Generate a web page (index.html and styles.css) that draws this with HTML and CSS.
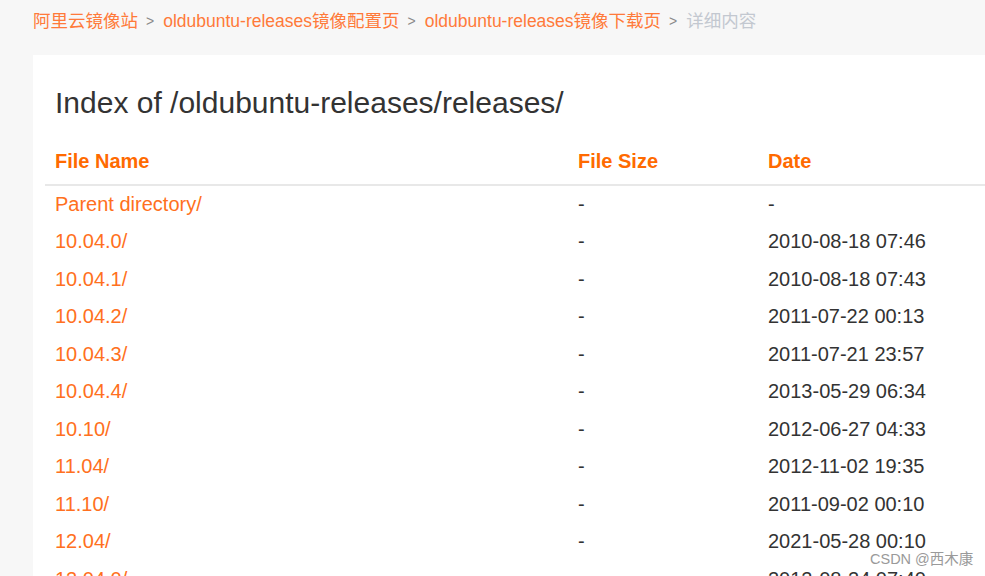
FILE: index.html
```html
<!DOCTYPE html>
<html lang="zh-CN">
<head>
<meta charset="utf-8">
<title>Index of /oldubuntu-releases/releases/</title>
<link rel="stylesheet" href="styles.css">
</head>
<body>
<div class="page">
  <nav class="crumbs">
    <a class="crumb" href="#">阿里云镜像站</a><span class="sep">&gt;</span>
    <a class="crumb" href="#">oldubuntu-releases镜像配置页</a><span class="sep">&gt;</span>
    <a class="crumb" href="#">oldubuntu-releases镜像下载页</a><span class="sep">&gt;</span>
    <span class="crumb current">详细内容</span>
  </nav>
  <main class="card">
    <h1 class="title">Index of /oldubuntu-releases/releases/</h1>
    <table class="listing">
      <thead>
        <tr><th class="c-name">File Name</th><th class="c-size">File Size</th><th class="c-date">Date</th></tr>
      </thead>
      <tbody>
        <tr><td><a href="#">Parent directory/</a></td><td>-</td><td>-</td></tr>
        <tr><td><a href="#">10.04.0/</a></td><td>-</td><td>2010-08-18 07:46</td></tr>
        <tr><td><a href="#">10.04.1/</a></td><td>-</td><td>2010-08-18 07:43</td></tr>
        <tr><td><a href="#">10.04.2/</a></td><td>-</td><td>2011-07-22 00:13</td></tr>
        <tr><td><a href="#">10.04.3/</a></td><td>-</td><td>2011-07-21 23:57</td></tr>
        <tr><td><a href="#">10.04.4/</a></td><td>-</td><td>2013-05-29 06:34</td></tr>
        <tr><td><a href="#">10.10/</a></td><td>-</td><td>2012-06-27 04:33</td></tr>
        <tr><td><a href="#">11.04/</a></td><td>-</td><td>2012-11-02 19:35</td></tr>
        <tr><td><a href="#">11.10/</a></td><td>-</td><td>2011-09-02 00:10</td></tr>
        <tr><td><a href="#">12.04/</a></td><td>-</td><td>2021-05-28 00:10</td></tr>
        <tr><td><a href="#">12.04.0/</a></td><td>-</td><td>2012-08-24 07:40</td></tr>
      </tbody>
    </table>
  </main>
</div>
<div class="watermark">CSDN @西木康</div>
</body>
</html>
```
FILE: styles.css
```css
html, body {
  margin: 0;
  padding: 0;
  height: 100%;
  overflow: hidden;
}
body {
  background: #f7f7f7;
  font-family: "Liberation Sans", Arial, "Noto Sans CJK SC", sans-serif;
  color: #333;
}
.page {
  padding-left: 33px;
}
.crumbs {
  display: flex;
  align-items: center;
  height: 26px;
  padding-top: 8px;
  font-size: 17.5px;
  line-height: 26px;
  white-space: nowrap;
}
.crumb {
  color: #ff7a3a;
  text-decoration: none;
}
.crumb.current {
  color: #c3c8d0;
}
.sep {
  color: #8a8a8a;
  font-size: 14px;
  margin: 0 9px 0 8px;
}
.card {
  margin-top: 21px;
  background: #fff;
  width: 1000px;
  padding: 29.5px 0 0 12px;
}
.title {
  margin: 0 0 18px 10px;
  font-size: 30px;
  line-height: 36px;
  font-weight: normal;
  color: #333;
}
.listing {
  border-collapse: collapse;
  width: 990px;
  font-size: 20px;
  table-layout: fixed;
}
.listing th {
  text-align: left;
  color: #ff6a00;
  font-weight: bold;
  height: 45px;
  padding: 0 10px;
  border-bottom: 2px solid #e8e8e8;
  vertical-align: middle;
}
.listing td {
  height: 37.5px;
  padding: 0 10px;
  vertical-align: middle;
  white-space: nowrap;
}
.c-name { width: 503px; }
.c-size { width: 170px; }
.listing a {
  color: #ff7020;
  text-decoration: none;
}
.watermark {
  position: absolute;
  left: 870px;
  top: 549px;
  font-size: 14.5px;
  line-height: 20px;
  color: #9a9a9a;
  font-family: "Liberation Sans", Arial, "Noto Sans CJK SC", sans-serif;
}
```
